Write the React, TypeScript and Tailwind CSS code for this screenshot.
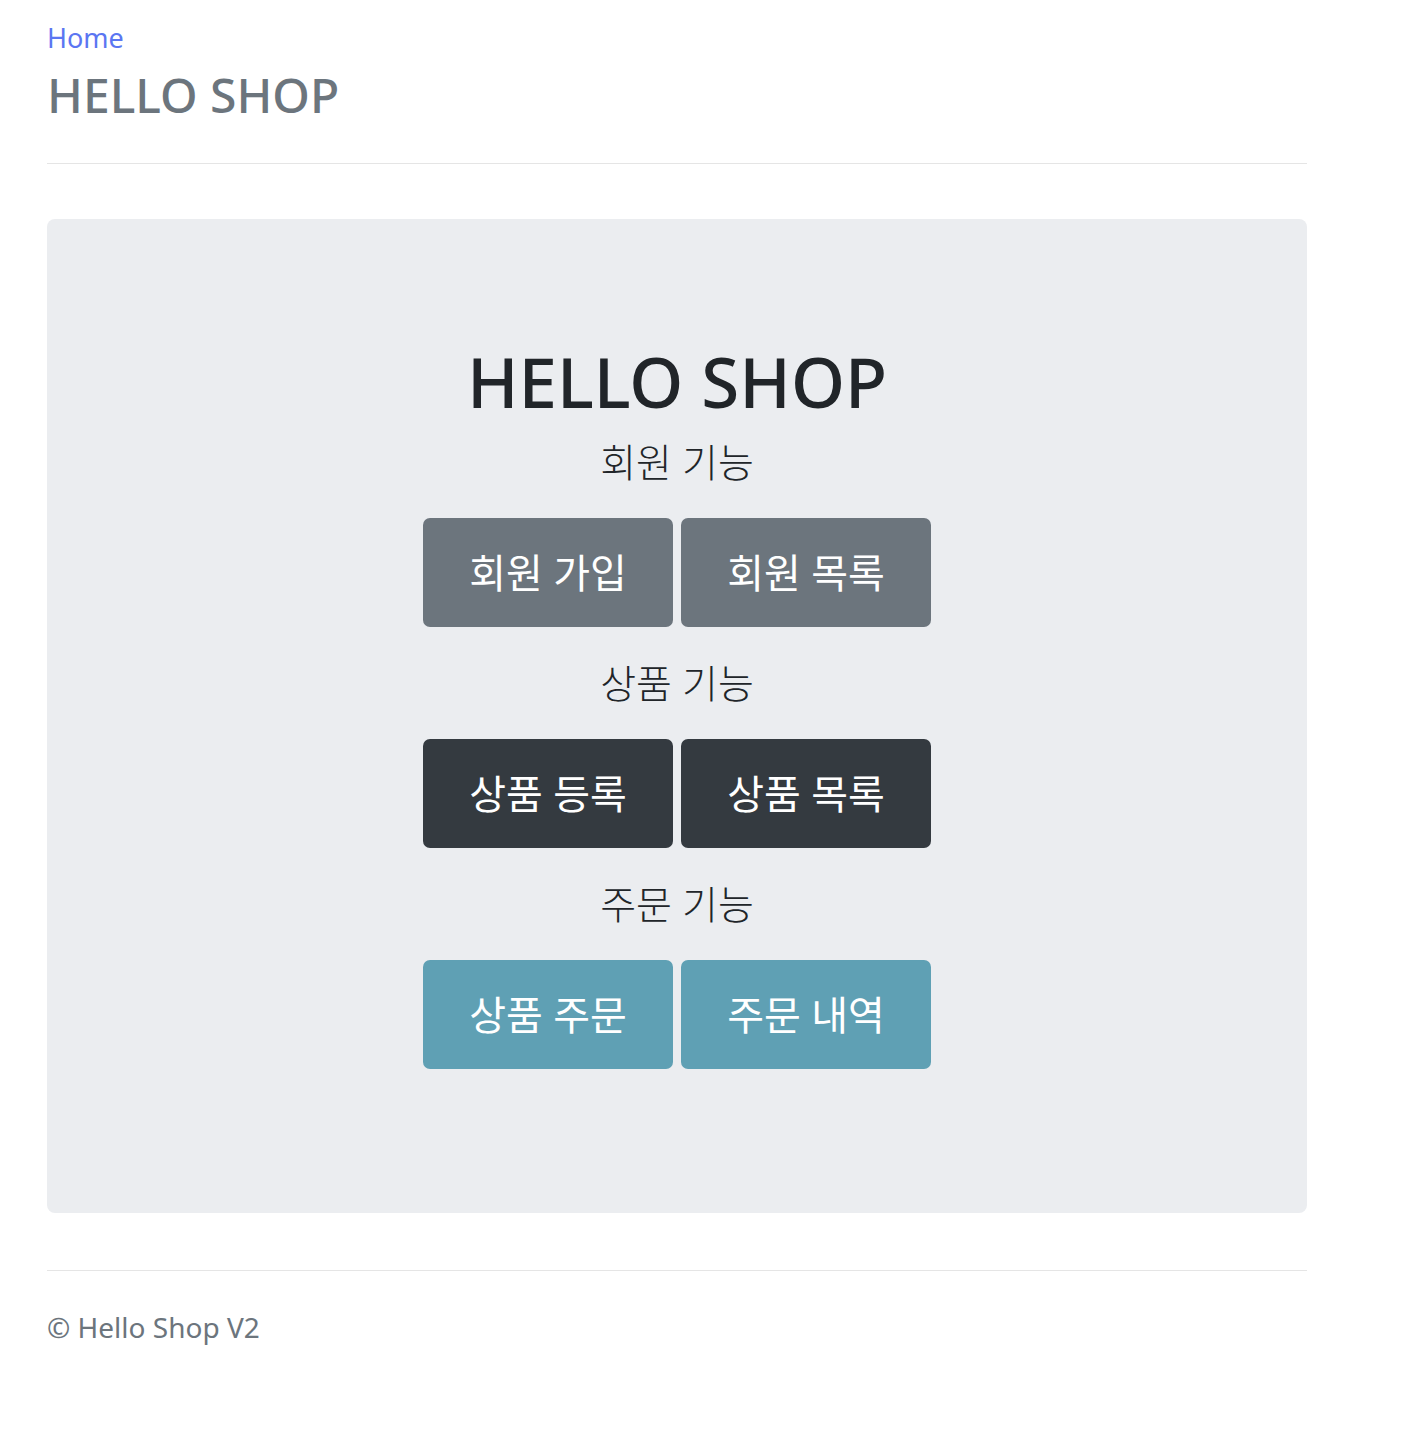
import React from 'react';

const font = { fontFamily: '"Noto Sans", "Noto Sans CJK KR", sans-serif' };

function Btn({ label, className }: { label: string; className: string }) {
  return (
    <a
      href="#"
      className={`flex h-[109px] w-[250px] items-center justify-center rounded-[7px] text-[40px] text-white ${className}`}
    >
      {label}
    </a>
  );
}

const groups = [
  { title: '회원 기능', color: 'bg-[#6c757d]', items: ['회원 가입', '회원 목록'] },
  { title: '상품 기능', color: 'bg-[#343a40]', items: ['상품 등록', '상품 목록'] },
  { title: '주문 기능', color: 'bg-[#5fa0b4]', items: ['상품 주문', '주문 내역'] },
];

export default function App() {
  return (
    <div className="min-h-[1430px] bg-white" style={font}>
      <div className="ml-[47px] w-[1260px]">
        <div className="pt-[16px]">
          <a href="#" className="block text-[27px] leading-[44px] text-[#5b76f2]">
            Home
          </a>
          <h3 className="mt-[3px] text-[48px] leading-[64px] font-medium text-[#6c757d]">HELLO SHOP</h3>
        </div>
        <div className="mt-[36px] border-t border-[#e5e5e5]" />

        <div className="mt-[55px] flex h-[994px] flex-col items-center rounded-[8px] bg-[#ebedf0] pt-[120px]">
          <h1 className="text-[69px] leading-[84px] font-medium text-[#212529]">HELLO SHOP</h1>
          {groups.map((g, i) => (
            <div key={g.title} className="flex flex-col items-center">
              <p
                className={`text-[39px] leading-[56px] font-light text-[#212529] ${i === 0 ? 'mt-[11px]' : 'mt-[28px]'}`}
              >
                {g.title}
              </p>
              <div className="mt-[28px] flex gap-[8px]">
                {g.items.map((it) => (
                  <Btn key={it} label={it} className={g.color} />
                ))}
              </div>
            </div>
          ))}
        </div>

        <div className="mt-[57px] border-t border-[#e5e5e5]" />
        <p className="mt-[36px] text-[28px] leading-[40px] text-[#6c757d]">© Hello Shop V2</p>
      </div>
    </div>
  );
}
